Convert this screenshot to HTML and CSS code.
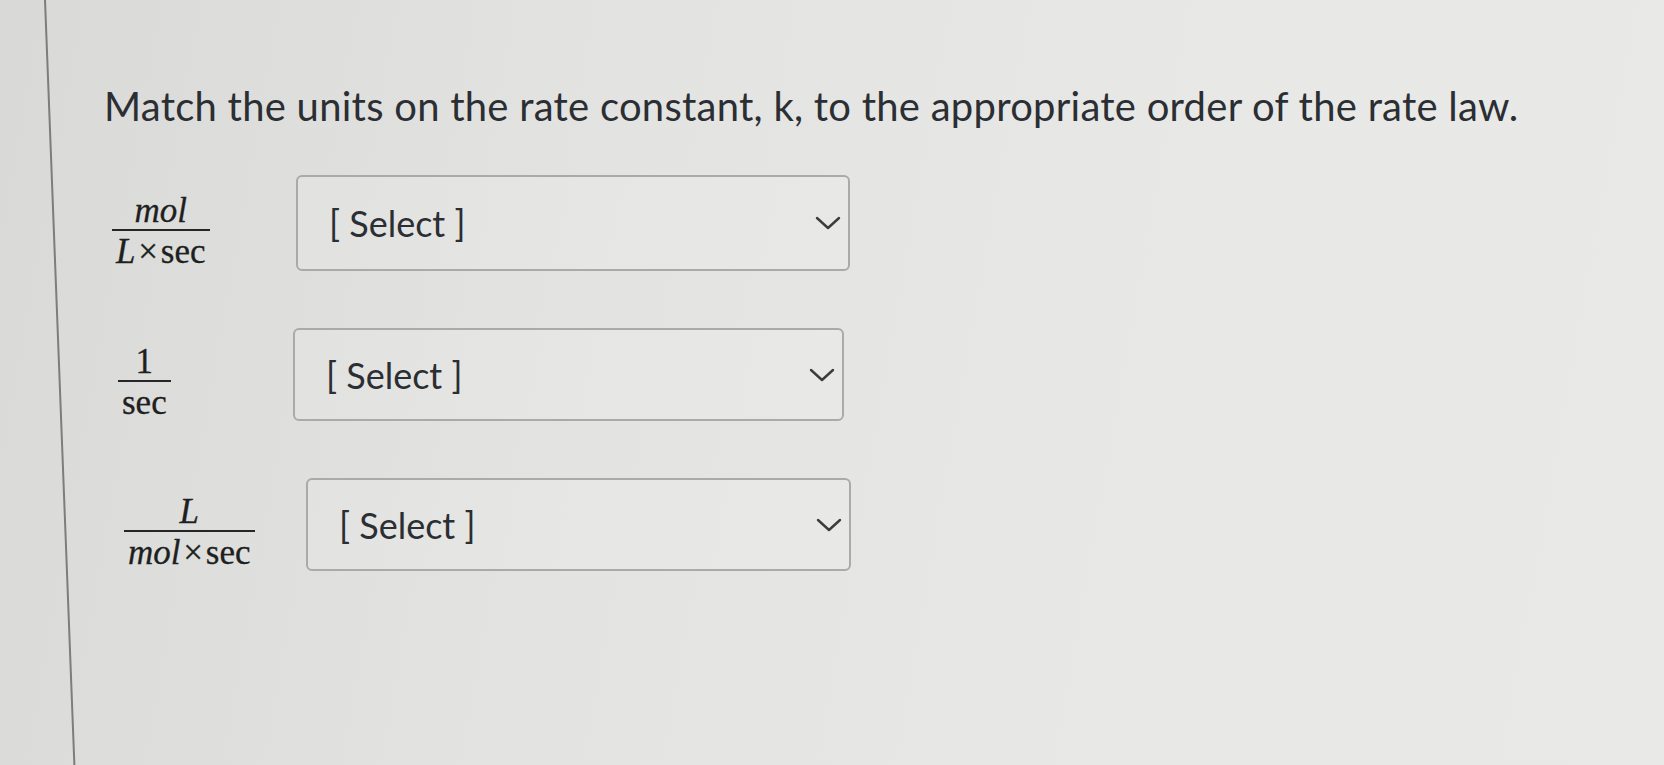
FILE: index.html
```html
<!DOCTYPE html>
<html lang="en">

<head>
    <meta charset="UTF-8" />
    <meta name="viewport" content="width=device-width, initial-scale=1.0" />
    <title>Matching question</title>
    <link rel="stylesheet" href="styles.css">
</head>

<body>

    <div class="page">
        <!-- Left edge of the course frame -->
        <div class="side"></div>

        <div class="question">
            <p class="prompt">Match the units on the rate constant, k, to the appropriate order of the rate law.</p>

            <div class="answers">
                <!-- Row 1 -->
                <div class="answer">
                    <div class="label">
                        <span class="frac">
                            <span class="num"><i>mol</i></span>
                            <span class="den"><i>L</i><span class="times">×</span>sec</span>
                        </span>
                    </div>
                    <div class="select">
                        <span class="select-text">[ Select ]</span>
                        <svg class="chevron" width="26" height="14" viewBox="0 0 26 14">
                            <path d="M2 2 L13 12 L24 2" fill="none" stroke="#3b3c3e" stroke-width="2.4" stroke-linecap="round" stroke-linejoin="round" />
                        </svg>
                    </div>
                </div>

                <!-- Row 2 -->
                <div class="answer">
                    <div class="label row2">
                        <span class="frac">
                            <span class="num">1</span>
                            <span class="den">sec</span>
                        </span>
                    </div>
                    <div class="select short">
                        <span class="select-text">[ Select ]</span>
                        <svg class="chevron" width="26" height="14" viewBox="0 0 26 14">
                            <path d="M2 2 L13 12 L24 2" fill="none" stroke="#3b3c3e" stroke-width="2.4" stroke-linecap="round" stroke-linejoin="round" />
                        </svg>
                    </div>
                </div>

                <!-- Row 3 -->
                <div class="answer">
                    <div class="label row3">
                        <span class="frac">
                            <span class="num"><i>L</i></span>
                            <span class="den"><i>mol</i><span class="times">×</span>sec</span>
                        </span>
                    </div>
                    <div class="select shifted">
                        <span class="select-text">[ Select ]</span>
                        <svg class="chevron" width="26" height="14" viewBox="0 0 26 14">
                            <path d="M2 2 L13 12 L24 2" fill="none" stroke="#3b3c3e" stroke-width="2.4" stroke-linecap="round" stroke-linejoin="round" />
                        </svg>
                    </div>
                </div>
            </div>
        </div>
    </div>

</body>

</html>
```

FILE: styles.css
```css
body {
    margin: 0;
    height: 765px;
    overflow: hidden;
    font-family: Lato, "Open Sans", sans-serif;
    color: #2b2e33;
    background: linear-gradient(100deg, #d9d9d7 0%, #e3e3e1 35%, #e8e8e6 70%, #e9e9e7 100%);
}

.page {
    display: flex;
    height: 100%;
}

/* Bordure gauche (legerement penchee comme sur la photo) */
.side {
    width: 44px;
    flex: none;
    border-right: 2px solid #7d7d7d;
    transform: skewX(2.2deg);
    transform-origin: top left;
}

.question {
    padding-left: 58px;
    padding-top: 82px;
}

.prompt {
    margin: 0;
    font-size: 40px;
    letter-spacing: 0.25px;
    line-height: 1.2;
    white-space: nowrap;
}

.answers {
    margin-top: 45px;
    display: flex;
    flex-direction: column;
    gap: 57px;
}

.answer {
    display: flex;
    align-items: center;
}

.label {
    width: 192px;
    flex: none;
    padding-left: 8px;
    box-sizing: border-box;
}

.label.row2 {
    padding-left: 14px;
}

.label.row3 {
    padding-left: 20px;
}

.frac {
    display: inline-flex;
    flex-direction: column;
    align-items: center;
    margin-top: 15px;
    font-family: "Liberation Serif", "Times New Roman", serif;
    font-size: 35px;
    line-height: 1;
    color: #1e1f21;
    -webkit-text-stroke: 0.3px #1e1f21;
}

.num {
    padding: 0 4px 1px;
    border-bottom: 2px solid #262626;
    align-self: stretch;
    text-align: center;
}

.den {
    padding: 3px 4px 0;
}

.times {
    margin: 0 0.08em;
}

.select {
    width: 554px;
    height: 96px;
    box-sizing: border-box;
    border: 2px solid #aaaaa8;
    border-radius: 6px;
    background: rgba(255, 255, 255, 0.12);
    display: flex;
    align-items: center;
    padding: 0 7px 0 31px;
}

.select.short {
    width: 551px;
    height: 93px;
    margin-left: -3px;
}

.select.shifted {
    width: 545px;
    height: 93px;
    margin-left: 10px;
}

.select-text {
    font-size: 36px;
    color: #2b2e33;
}

.chevron {
    margin-left: auto;
}
```
